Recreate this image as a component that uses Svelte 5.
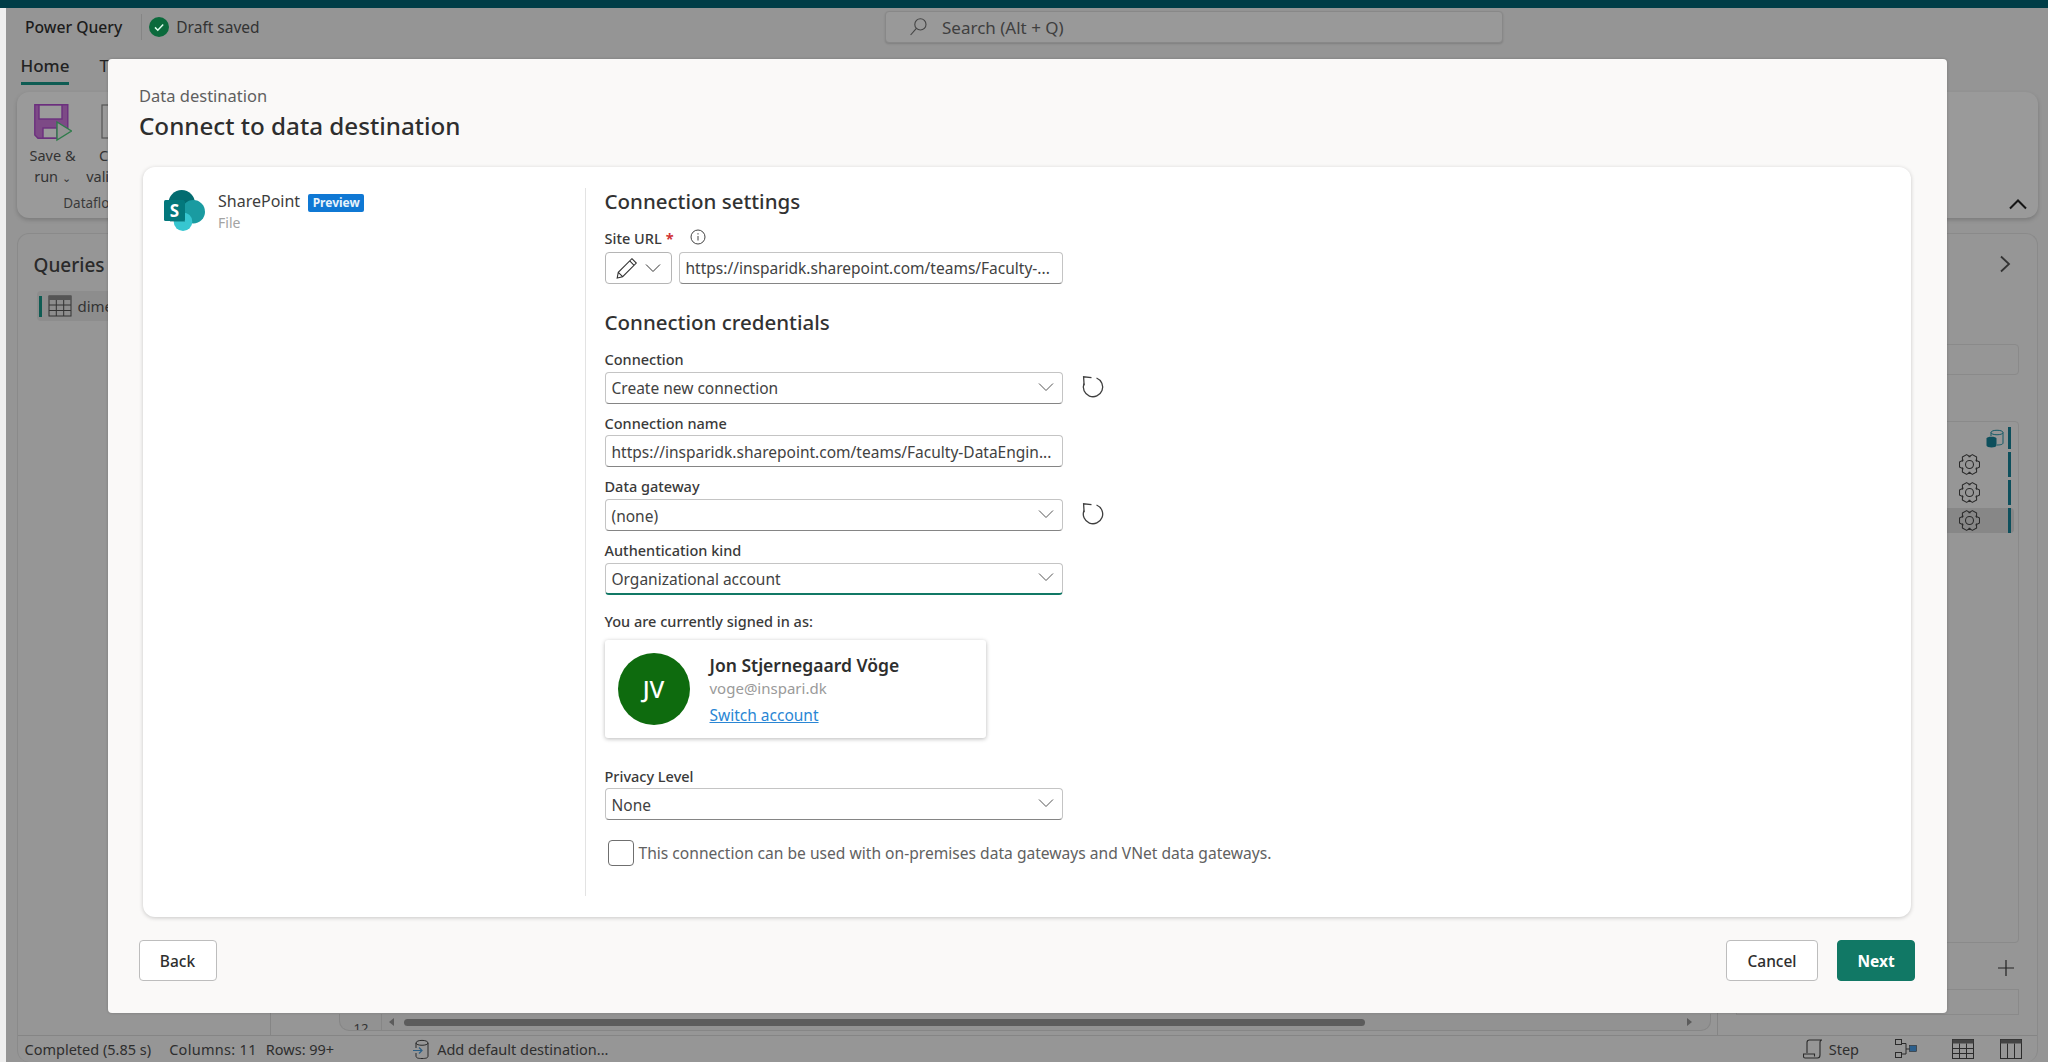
<script>
  const gearPath = (() => {
    // six toothed gear outline, 20 x 20 box
    let d = "";
    for (let i = 0; i < 6; i++) {
      const a = (Math.PI / 3) * i;
      const pts = [
        [7.4, a - 0.6],
        [9.8, a - 0.24],
        [9.8, a + 0.24],
        [7.4, a + 0.6],
      ];
      for (const [r, t] of pts) {
        const x = (10 + r * Math.cos(t)).toFixed(2);
        const y = (10 + r * Math.sin(t)).toFixed(2);
        d += (d ? "L" : "M") + x + " " + y;
      }
    }
    return d + "Z";
  })();

  const steps = [false, false, true];
</script>

{#snippet chevron()}
  <svg class="chev" viewBox="0 0 16 16" width="16" height="16"><path d="M1 4.500 8 11.500l7-7" /></svg>
{/snippet}

{#snippet refresh()}
  <svg class="refresh" viewBox="0 0 24 24" width="24" height="24">
    <path d="M15.500 3A9.700 9.700 0 1 1 3 8.400" />
    <path d="M10.500 2.600 2.600 1.800l.5 8.400" />
  </svg>
{/snippet}

<div class="app">
  <div class="topbar"></div>

  <div class="shell">
    <header class="head">
      <span class="product">Power Query</span>
      <span class="head-sep"></span>
      <svg class="saved-icon" viewBox="0 0 20 20" width="20" height="20">
        <circle cx="10" cy="10" r="10" fill="#0b6a3c" />
        <path d="M6 10.400l2.800 2.800L14.200 7.600" fill="none" stroke="#dfe" stroke-width="1.500" />
      </svg>
      <span class="saved">Draft saved</span>
      <div class="search">
        <svg viewBox="0 0 20 20" width="20" height="20"><circle cx="12.400" cy="7.400" r="5.600" /><path d="M8.400 11.400 2.600 18" /></svg>
        <span>Search (Alt + Q)</span>
      </div>
    </header>

    <nav class="tabs">
      <span class="tab active">Home</span>
      <span class="tab">Transform</span>
    </nav>

    <section class="ribbon">
      <div class="rib-group">
        <div class="rib-btns">
          <div class="rib-btn">
            <svg viewBox="0 0 38 38" width="38" height="38">
              <path d="M.8.800h33v25H25v8.500H4L.8 31z" fill="#7d4a86" stroke="#6c2f7e" stroke-width="1.400" />
              <rect x="5" y="1" width="23" height="14" fill="#9b9b9b" stroke="#6c2f7e" stroke-width="1.400" />
              <rect x="9" y="24" width="14" height="10" fill="#9b9b9b" stroke="#6c2f7e" stroke-width="1.400" />
              <path d="M23 18 37.500 27 23 36z" fill="#959595" stroke="#2f7c4b" stroke-width="1.400" />
            </svg>
            <span>Save &amp;<br />run <small>⌄</small></span>
          </div>
          <div class="rib-btn">
            <svg viewBox="0 0 38 38" width="38" height="38"><rect x="1" y="1" width="34" height="33" fill="none" stroke="#555" stroke-width="1.200" /></svg>
            <span>Check<br />validation</span>
          </div>
        </div>
        <div class="rib-label">Dataflow</div>
      </div>
      <svg class="collapse" viewBox="0 0 20 12" width="20" height="12"><path d="M2 10.500 10 2.500l8 8" /></svg>
    </section>

    <section class="work">
      <div class="panes">
        <aside class="queries">
          <h2>Queries</h2>
          <div class="query">
            <i class="query-bar"></i>
            <svg viewBox="0 0 24 22" width="24" height="22">
              <rect x="1" y="1" width="22" height="20" fill="none" stroke="#333" stroke-width="1" />
              <rect x="1" y="1" width="22" height="4" fill="#555" />
              <path d="M1 10h22M1 15.500h22M8.300 5v16M15.700 5v16" stroke="#333" stroke-width="1" />
            </svg>
            <span>dimension</span>
          </div>
        </aside>

        <div class="center">
          <div class="grid-space"></div>
          <div class="hscroll">
            <span class="row-no">12</span>
            <div class="track">
              <i class="arrow left"></i>
              <i class="thumb"></i>
              <i class="arrow right"></i>
            </div>
          </div>
        </div>

        <aside class="settings">
          <svg class="expand" viewBox="0 0 12 20" width="12" height="20"><path d="M2 2.500 10 10l-8 7.500" /></svg>
          <div class="name-box"></div>
          <div class="steps">
            <div class="step-row first">
              <svg viewBox="0 0 18 20" width="18" height="20">
                <path d="M5 4.500C5 1.500 17 1.500 17 4.500V15c0 1.500-3 2-6 2" fill="none" stroke="#145a66" stroke-width="1" />
                <path d="M5 4.500c0 3 12 3 12 0M5 4.500V8" fill="none" stroke="#145a66" stroke-width="1" />
                <path d="M.500 10.500c0-2.500 10-2.500 10 0v7c0 2.500-10 2.500-10 0z" fill="#0d4f5c" />
              </svg>
              <i class="step-bar"></i>
            </div>
            {#each steps as selected}
              <div class="step-row" class:selected>
                <svg class="gear" viewBox="0 0 20 20" width="21" height="21">
                  <path d={gearPath} />
                  <circle cx="10" cy="10" r="3.800" />
                </svg>
                <i class="step-bar"></i>
              </div>
            {/each}
          </div>
          <svg class="plus" viewBox="0 0 16 16" width="16" height="16"><path d="M8 0v16M0 8h16" /></svg>
          <div class="dest-box"></div>
        </aside>
      </div>

      <footer class="status">
        <span class="st-a">Completed (5.85 s)</span>
        <span class="st-b">Columns: 11</span>
        <span class="st-c">Rows: 99+</span>
        <svg class="st-dest" viewBox="0 0 18 20" width="18" height="20">
          <path d="M3 4c0-3.500 12-3.500 12 0v13c0 2-2 2.500-6 2.500S3 19 3 17v-3M3 4c0 3 12 3 12 0M3 4v5" fill="none" stroke="#2b2b2b" stroke-width="1" />
          <path d="M0 11.500h9M6 8.500l3 3-3 3" fill="none" stroke="#2b5f86" stroke-width="1.200" />
        </svg>
        <span class="st-d">Add default destination...</span>
        <span class="st-right">
          <span class="st-step">
            <svg viewBox="0 0 20 20" width="20" height="20">
              <path d="M4 14V3.500C4 2 5 1 6.500 1H19c-1.500 0-2 1-2 2.500V16c0 2-1 3-2.500 3H2c-1 0-1.500-.7-1.500-1.500V15h11v2.500" fill="none" stroke="#2b2b2b" stroke-width="1.100" />
            </svg>
            Step
          </span>
          <svg class="st-diagram" viewBox="0 0 22 20" width="22" height="20">
            <path d="M6.500 4.500H11v10.500H6.500M11 10h4" fill="none" stroke="#2b2b2b" stroke-width="1" />
            <rect x=".5" y=".5" width="6" height="5" fill="none" stroke="#2b2b2b" />
            <rect x=".5" y="13.500" width="6" height="5" fill="none" stroke="#2b2b2b" />
            <rect x="14.500" y="6.500" width="7" height="6" fill="#2c5f8c" stroke="#2b2b2b" stroke-width=".6" />
          </svg>
          <svg class="st-table" viewBox="0 0 22 20" width="22" height="20">
            <rect x=".5" y=".5" width="21" height="19" fill="none" stroke="#2b2b2b" />
            <rect x=".5" y=".5" width="21" height="4" fill="#444" />
            <path d="M.5 9.500h21M.5 14.500h21M7.500 4.500v15M14.500 4.500v15" stroke="#2b2b2b" />
          </svg>
          <svg class="st-cols" viewBox="0 0 22 20" width="22" height="20">
            <rect x=".5" y=".5" width="21" height="19" fill="none" stroke="#2b2b2b" />
            <rect x=".5" y=".5" width="21" height="4" fill="#444" />
            <path d="M7.500 4.500v15M14.500 4.500v15" stroke="#2b2b2b" />
          </svg>
        </span>
      </footer>
    </section>
  </div>

  <div class="modal">
    <div class="modal-head">
      <div class="crumb">Data destination</div>
      <h1>Connect to data destination</h1>
    </div>

    <div class="card">
      <div class="source">
        <svg class="sp-logo" viewBox="0 0 41 41" width="41" height="41">
          <circle cx="17.700" cy="13.300" r="13.300" fill="#036c70" />
          <circle cx="29.300" cy="21.700" r="11.700" fill="#1a9ba1" />
          <circle cx="19" cy="31.700" r="9.300" fill="#37c6d0" />
          <rect x="6" y="10" width="15" height="22" fill="#04585c" opacity=".35" />
          <rect x="0" y="10" width="21" height="21" rx="1.500" fill="#03787c" />
          <text x="10.500" y="26.500" text-anchor="middle" font-size="17" font-weight="700" fill="#fff">S</text>
        </svg>
        <div class="source-text">
          <div class="source-title">SharePoint <span class="badge">Preview</span></div>
          <div class="source-sub">File</div>
        </div>
      </div>

      <div class="form">
        <h3>Connection settings</h3>
        <div class="label site-label">
          Site URL <b>*</b>
          <svg class="info" viewBox="0 0 16 16" width="16" height="16">
            <circle cx="8" cy="8" r="7" />
            <path d="M8 7v4.500M8 4.200v1.300" />
          </svg>
        </div>
        <div class="url-row">
          <div class="box pencil">
            <svg viewBox="0 0 22 22" width="24" height="24"><path d="M15.500 2.500 19.500 6.500 7 19l-5 1.200L3 15z M13.500 4.500l4 4 M3 15l4 4" /></svg>
            {@render chevron()}
          </div>
          <div class="box url">https://insparidk.sharepoint.com/teams/Faculty-...</div>
        </div>

        <h3 class="second">Connection credentials</h3>

        <div class="fields">
          <div class="field">
            <div class="label">Connection</div>
            <div class="field-row">
              <div class="box select">Create new connection {@render chevron()}</div>
              {@render refresh()}
            </div>
          </div>
          <div class="field">
            <div class="label">Connection name</div>
            <div class="field-row">
              <div class="box select">https://insparidk.sharepoint.com/teams/Faculty-DataEngin...</div>
            </div>
          </div>
          <div class="field">
            <div class="label">Data gateway</div>
            <div class="field-row">
              <div class="box select">(none) {@render chevron()}</div>
              {@render refresh()}
            </div>
          </div>
          <div class="field">
            <div class="label">Authentication kind</div>
            <div class="field-row">
              <div class="box select focused">Organizational account {@render chevron()}</div>
            </div>
          </div>
        </div>

        <div class="label signed">You are currently signed in as:</div>
        <div class="account">
          <div class="avatar">JV</div>
          <div class="who">
            <div class="who-name">Jon Stjernegaard Vöge</div>
            <div class="who-mail">voge@inspari.dk</div>
            <span class="who-link">Switch account</span>
          </div>
        </div>

        <div class="field privacy">
          <div class="label">Privacy Level</div>
          <div class="field-row">
            <div class="box select">None {@render chevron()}</div>
          </div>
        </div>

        <div class="check-row">
          <span class="check"></span>
          <span>This connection can be used with on-premises data gateways and VNet data gateways.</span>
        </div>
      </div>
    </div>

    <div class="modal-foot">
      <button class="btn">Back</button>
      <span class="foot-gap"></span>
      <button class="btn cancel">Cancel</button>
      <button class="btn primary">Next</button>
    </div>
  </div>
</div>

<style>
  :global(body) {
    margin: 0;
    background: #959595;
  }

  .app {
    position: relative;
    width: 2048px;
    height: 1062px;
    overflow: hidden;
    display: flex;
    flex-direction: column;
    font-family: "Noto Sans", Roboto, sans-serif;
    color: #2a2a2a;
    background: #959595;
  }

  .topbar {
    height: 8px;
    flex: none;
    background: #003d47;
  }

  .shell {
    flex: 1;
    min-height: 0;
    display: flex;
    flex-direction: column;
    border-left: 6px solid #efefef;
    padding-right: 10px;
  }

  /* header */
  .head {
    height: 37px;
    flex: none;
    display: flex;
    align-items: center;
    padding-left: 19px;
    font-size: 15.500px;
    position: relative;
  }

  .product {
    font-weight: 500;
    font-size: 15.700px;
    color: #1c1c1c;
  }

  .head-sep {
    width: 1px;
    height: 26px;
    background: #858585;
    margin: 0 7px 0 19px;
  }

  .saved {
    margin-left: 7px;
    color: #333;
  }

  .search {
    position: absolute;
    left: 879px;
    top: 3px;
    width: 618px;
    height: 32px;
    box-sizing: border-box;
    display: flex;
    align-items: center;
    gap: 14px;
    padding-left: 22px;
    background: #999;
    border: 1px solid #888;
    border-radius: 4px;
    box-shadow: 0 1px 2px rgba(0, 0, 0, 0.15);
    color: #3f3f3f;
    font-size: 17px;
  }

  .search svg {
    fill: none;
    stroke: #444;
    stroke-width: 1.100;
  }

  .tabs {
    height: 47px;
    flex: none;
    display: flex;
    gap: 30px;
    padding-left: 14.500px;
    align-items: flex-start;
    font-size: 17px;
  }

  .tab {
    padding-top: 8px;
    height: 29px;
    line-height: 26px;
    color: #222;
  }

  .tab.active {
    font-weight: 500;
    border-bottom: 3px solid #0e5c53;
  }

  /* ribbon */
  .ribbon {
    height: 126px;
    flex: none;
    margin-left: 10.500px;
    background: #9a9a9a;
    border-radius: 12px;
    box-shadow: 0 2px 4px rgba(0, 0, 0, 0.18);
    position: relative;
    box-sizing: border-box;
    padding: 12px 12px 0;
  }

  .rib-group {
    width: 128px;
    text-align: center;
  }

  .rib-btns {
    display: flex;
    justify-content: space-between;
  }

  .rib-btn {
    display: flex;
    flex-direction: column;
    align-items: center;
    width: 48px;
    font-size: 14.500px;
    line-height: 21px;
    color: #333;
    white-space: nowrap;
  }

  .rib-btn + .rib-btn {
    width: 72px;
    margin-right: 1px;
  }

  .rib-btn svg {
    margin-bottom: 3px;
  }

  .rib-btn small {
    font-size: 11px;
  }

  .rib-label {
    margin-top: 6px;
    font-size: 13.500px;
    color: #3a3a3a;
    padding-right: 2px;
  }

  .collapse {
    position: absolute;
    right: 10px;
    bottom: 8px;
    fill: none;
    stroke: #151515;
    stroke-width: 2;
  }

  /* workspace */
  .work {
    flex: 1;
    min-height: 0;
    margin: 15px 0 0 10.500px;
    border: 1px solid #8a8a8a;
    border-bottom: none;
    border-radius: 12px 12px 12px 12px;
    display: flex;
    flex-direction: column;
    background: #969696;
  }

  .panes {
    flex: 1;
    min-height: 0;
    display: flex;
  }

  .queries {
    width: 253px;
    flex: none;
    box-sizing: border-box;
    border-right: 1px solid #858585;
    padding: 18px 20px 0;
  }

  .queries h2 {
    margin: 0 0 13px -4px;
    font-size: 19px;
    line-height: 26px;
    font-weight: 500;
    color: #2a2a2a;
  }

  .query {
    height: 30px;
    margin-left: -1px;
    display: flex;
    align-items: center;
    background: #8d8d8d;
    border-radius: 4px;
    padding-left: 2px;
    font-size: 15px;
    color: #333;
  }

  .query svg {
    margin: 0 6px;
  }

  .query-bar {
    width: 3px;
    height: 21px;
    background: #0e5c53;
    margin-right: 0;
  }

  .center {
    flex: 1;
    min-width: 0;
    display: flex;
    flex-direction: column;
    padding-left: 68px;
    padding-right: 6px;
  }

  .grid-space {
    flex: 1;
  }

  .hscroll {
    height: 16px;
    margin-bottom: 4px;
    display: flex;
    background: #929292;
    border: 1px solid #868686;
    border-top: none;
    border-radius: 0 0 10px 10px;
    overflow: hidden;
  }

  .row-no {
    width: 42px;
    padding-left: 14px;
    box-sizing: border-box;
    font-size: 13px;
    line-height: 28px;
    color: #333;
    border-right: 1px solid #868686;
  }

  .track {
    flex: 1;
    display: flex;
    align-items: center;
    padding: 0 18px 0 7px;
    gap: 10px;
  }

  .thumb {
    width: 961px;
    height: 7px;
    border-radius: 4px;
    background: #5c5c5c;
  }

  .arrow {
    width: 0;
    height: 0;
    border-top: 4px solid transparent;
    border-bottom: 4px solid transparent;
  }

  .arrow.left {
    border-right: 5px solid #5c5c5c;
  }

  .arrow.right {
    margin-left: auto;
    border-left: 5px solid #5c5c5c;
  }

  .settings {
    width: 320px;
    flex: none;
    box-sizing: border-box;
    border-left: 1px solid #858585;
    padding-right: 18px;
    padding-left: 18px;
    display: flex;
    flex-direction: column;
    align-items: flex-end;
  }

  .expand {
    margin: 20px 8px 0 0;
    fill: none;
    stroke: #333;
    stroke-width: 1.800;
    flex: none;
  }

  .name-box {
    width: 100%;
    height: 31px;
    margin-top: 70px;
    flex: none;
    box-sizing: border-box;
    border: 1px solid #8a8a8a;
    border-radius: 4px;
  }

  .steps {
    width: 100%;
    height: 522px;
    margin-top: 46px;
    flex: none;
    box-sizing: border-box;
    border: 1px solid #8a8a8a;
    border-radius: 4px;
    padding: 5px 7px 0 0;
    display: flex;
    flex-direction: column;
    gap: 3px;
  }

  .step-row {
    height: 25px;
    display: flex;
    align-items: center;
    justify-content: flex-end;
    gap: 28px;
    border-radius: 4px;
    margin-right: -3px;
    padding-right: 3px;
  }

  .step-row.first {
    height: 22px;
    gap: 4px;
  }

  .step-row.selected {
    background: #878787;
  }

  .step-bar {
    width: 3px;
    height: 100%;
    background: #0d4f5c;
  }

  .gear path,
  .gear circle {
    fill: none;
    stroke: #2a2a2a;
    stroke-width: 1;
    stroke-linejoin: round;
  }

  .plus {
    margin: 17px 5px 0 0;
    flex: none;
    stroke: #222;
    stroke-width: 1.200;
  }

  .dest-box {
    width: 100%;
    height: 26px;
    margin-top: 13px;
    flex: none;
    box-sizing: border-box;
    border: 1px solid #8a8a8a;
  }

  .status {
    height: 27px;
    flex: none;
    display: flex;
    align-items: center;
    border-top: 1px solid #858585;
    font-size: 14.500px;
    color: #2e2e2e;
    padding: 0 0 0 7px;
    box-sizing: border-box;
  }

  .st-b {
    margin-left: 18px;
    letter-spacing: 0.3px;
  }

  .st-c {
    margin-left: 9px;
  }

  .st-dest {
    margin-left: 79px;
  }

  .st-d {
    margin-left: 6px;
  }

  .st-right {
    margin-left: auto;
    display: flex;
    align-items: center;
    padding-right: 15px;
  }

  .st-step {
    display: flex;
    align-items: center;
    gap: 6px;
    margin-right: 36px;
  }

  .st-table {
    margin: 0 26px 0 35px;
  }

  /* dialog */
  .modal {
    position: absolute;
    left: 107.500px;
    top: 59px;
    width: 1839px;
    height: 953.500px;
    display: flex;
    flex-direction: column;
    background: #faf9f8;
    border-radius: 4px;
    box-shadow: 0 0 3px rgba(0, 0, 0, 0.2);
  }

  .modal-head {
    height: 108px;
    flex: none;
    box-sizing: border-box;
    padding: 25px 0 0 31.500px;
  }

  .crumb {
    font-size: 16.500px;
    line-height: 24px;
    color: #5f5f5f;
  }

  h1 {
    margin: 1px 0 0;
    font-size: 24.200px;
    line-height: 34px;
    font-weight: 500;
    color: #2e2e2e;
  }

  .card {
    height: 750px;
    flex: none;
    margin: 0 36px 0 35px;
    box-sizing: border-box;
    background: #fff;
    border-radius: 12px;
    box-shadow: 0 1px 4px rgba(0, 0, 0, 0.2);
    display: flex;
    padding: 21px 0;
  }

  .source {
    width: 443px;
    flex: none;
    box-sizing: border-box;
    padding: 2px 0 0 21px;
    border-right: 1.500px solid #e3e3e3;
    display: flex;
    gap: 13.500px;
  }

  .sp-logo text {
    font-family: "Open Sans", sans-serif;
  }

  .source-title {
    font-size: 16px;
    line-height: 22px;
    color: #3d3d3d;
    display: flex;
    align-items: center;
    gap: 8px;
  }

  .badge {
    height: 18px;
    margin-top: 4px;
    padding: 0 4.500px;
    border-radius: 2px;
    background: #0f78d4;
    color: #e6f2fb;
    font-size: 12px;
    font-weight: 700;
    line-height: 18px;
  }

  .source-sub {
    font-size: 14px;
    line-height: 20px;
    color: #a3a3a3;
    margin-top: 1px;
  }

  .form {
    flex: 1;
    padding-left: 19px;
    color: #333;
  }

  h3 {
    margin: 0;
    font-size: 20.500px;
    line-height: 26px;
    font-weight: 500;
    color: #323232;
  }

  h3.second {
    margin-top: 25px;
  }

  .label {
    font-size: 14.500px;
    line-height: 20px;
    font-weight: 500;
    color: #3a3a3a;
    white-space: nowrap;
  }

  .site-label {
    margin-top: 14px;
    display: flex;
    align-items: center;
    gap: 4px;
  }

  .site-label b {
    color: #d13438;
  }

  .info {
    margin-left: 12px;
    margin-top: -2px;
    fill: none;
    stroke: #444;
    stroke-width: 1;
  }

  .url-row {
    display: flex;
    gap: 7px;
    margin-top: 4px;
  }

  .box {
    height: 32px;
    box-sizing: border-box;
    display: flex;
    align-items: center;
    background: #fff;
    border: 1px solid #c4c4c4;
    border-bottom-color: #858585;
    border-radius: 4px;
    font-size: 15.500px;
    color: #424242;
    padding: 1px 7px 0 6px;
    white-space: nowrap;
  }

  .pencil {
    width: 67px;
    gap: 6px;
    padding: 0 0 0 9px;
    border-color: #b5b5b5;
  }

  .pencil svg {
    fill: none;
    stroke: #333;
    stroke-width: 1;
    flex: none;
  }

  .url {
    width: 384px;
    padding-top: 0;
  }

  .chev {
    fill: none;
    stroke: #555;
    stroke-width: 1;
    flex: none;
  }

  .select .chev {
    margin-left: auto;
    margin-right: 1px;
    margin-top: -3px;
  }

  .fields {
    margin-top: 14px;
    display: flex;
    flex-direction: column;
    gap: 9px;
  }

  .field .label {
    margin-bottom: 2.700px;
  }

  .field-row {
    display: flex;
    align-items: center;
    gap: 18px;
  }

  .select {
    width: 458px;
    flex: none;
  }

  .focused {
    border-bottom: 2px solid #117865;
  }

  .refresh {
    fill: none;
    stroke: #3f3f3f;
    stroke-width: 1.300;
    margin-top: -2px;
  }

  .signed {
    margin-top: 16px;
  }

  .account {
    width: 381px;
    height: 98px;
    margin-top: 9px;
    box-sizing: border-box;
    border-radius: 3px;
    box-shadow: 0 1px 4px rgba(0, 0, 0, 0.28);
    display: flex;
    align-items: center;
    padding-left: 13px;
    gap: 20px;
    background: #fff;
  }

  .avatar {
    width: 72px;
    height: 72px;
    border-radius: 50%;
    background: #0e6b0e;
    color: #fff;
    font-size: 24px;
    font-weight: 500;
    display: flex;
    align-items: center;
    justify-content: center;
  }

  .who-name {
    font-size: 17.500px;
    line-height: 26px;
    font-weight: 600;
    color: #2e2e2e;
  }

  .who-mail {
    margin-top: -1px;
    font-size: 15px;
    line-height: 22px;
    color: #9a9a9a;
  }

  .who-link {
    display: block;
    margin-top: 5px;
    font-size: 15.500px;
    line-height: 22px;
    color: #2a86d4;
    text-decoration: underline;
  }

  .privacy {
    margin-top: 28px;
  }

  .check-row {
    margin-top: 20px;
    padding-left: 3px;
    display: flex;
    align-items: center;
    gap: 5px;
    font-size: 15.600px;
    color: #616161;
    white-space: nowrap;
  }

  .check {
    width: 26px;
    height: 26px;
    box-sizing: border-box;
    border: 1px solid #6f6f6f;
    border-radius: 4px;
  }

  .modal-foot {
    display: flex;
    gap: 19px;
    padding: 23px 31.500px 0 31px;
  }

  .foot-gap {
    flex: 1;
  }

  .btn {
    height: 41px;
    width: 78px;
    box-sizing: border-box;
    border: 1px solid #bdbdbd;
    border-radius: 4px;
    background: #fff;
    color: #2e2e2e;
    font-family: inherit;
    font-size: 15.500px;
    font-weight: 500;
    padding: 0;
  }

  .cancel {
    width: 92px;
  }

  .primary {
    background: #117865;
    border-color: #117865;
    color: #fff;
    font-weight: 700;
  }
</style>
